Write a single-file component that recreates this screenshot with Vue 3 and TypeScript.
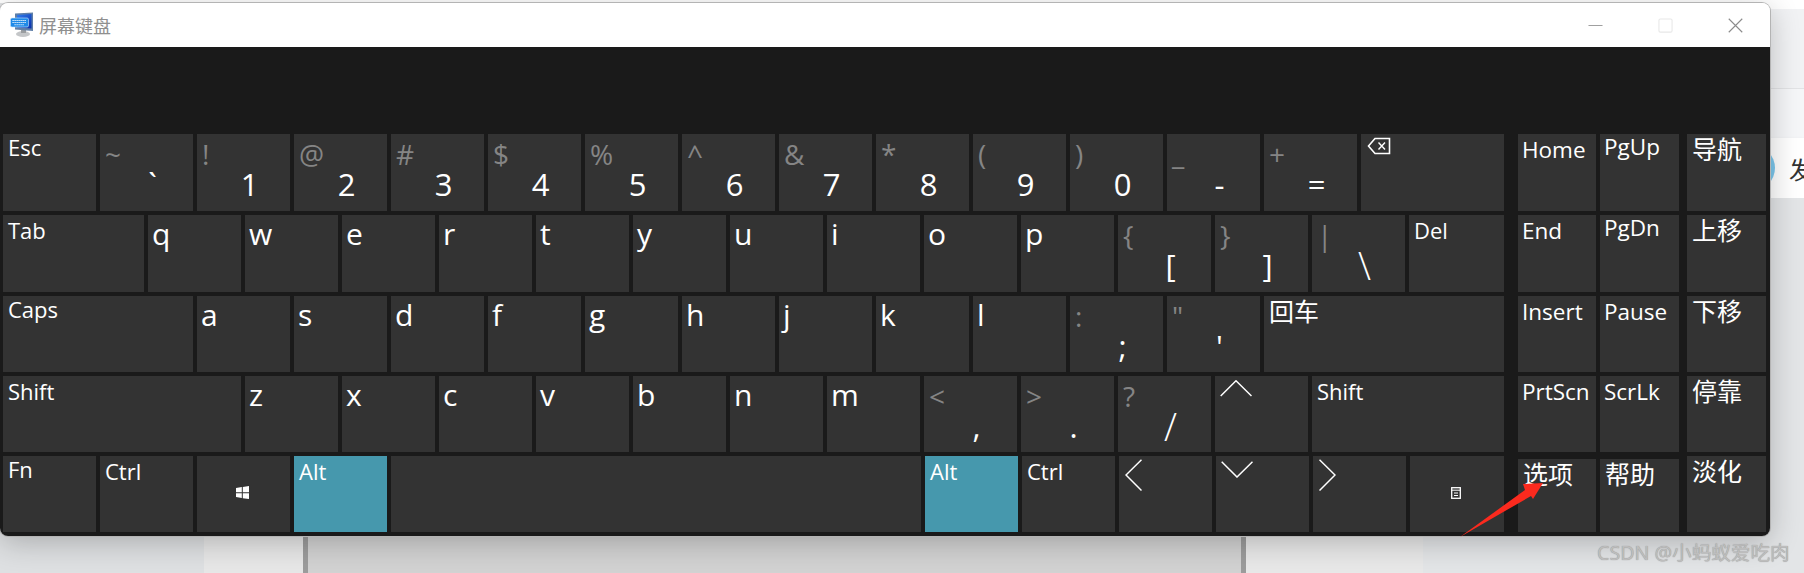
<template>
  <div class="desk">
    <div class="desk__seg desk__seg--a"></div>
    <div class="desk__seg desk__seg--b"></div>
    <div class="desk__rule"></div>
    <div class="desk__seg desk__seg--c"></div>
    <div class="desk__rule"></div>
    <div class="desk__seg desk__seg--d"></div>
    <div class="desk__side">
      <div class="side__top"></div>
      <div class="side__band"></div>
      <div class="side__band side__band--low"></div>
      <div class="side__chip">
        <span class="side__avatar"></span>
        <span class="side__text">发</span>
      </div>
      <div class="side__rest"></div>
    </div>

    <section class="osk">
      <header class="osk__title">
        <svg class="osk__icon" width="24" height="26" viewBox="0 0 24 26">
          <defs>
            <linearGradient id="scr" x1="0" y1="0" x2="1" y2="1">
              <stop offset="0" stop-color="#2f7df0" />
              <stop offset="1" stop-color="#0a2fa8" />
            </linearGradient>
          </defs>
          <ellipse cx="13" cy="22" rx="7" ry="3" fill="#c4c6c8" />
          <rect x="11" y="17" width="5" height="4" fill="#9a9da0" />
          <path d="M5 1.5 L23 0.5 V19 L5 17.5 Z" fill="#5f7fa8" />
          <path d="M7 3 L21.5 2 V16.5 L7 15.5 Z" fill="url(#scr)" />
          <rect x="0.5" y="6" width="18" height="9" rx="1.5" fill="#1f8ae8" stroke="#cfe6fb" stroke-width="0.6" />
          <path d="M2.5 8.5h14M2.5 10.5h14M4.5 12.8h10" stroke="#fff" stroke-width="1.1" stroke-dasharray="1.2 0.8" />
        </svg>
        <span class="osk__name">屏幕键盘</span>
        <div class="osk__ctrls">
          <svg width="15" height="15" viewBox="0 0 16 16" class="ctrl ctrl--min"><path d="M0.5 8h15" stroke="#a0a0a0" stroke-width="1.2" /></svg>
          <svg width="15" height="15" viewBox="0 0 16 16" class="ctrl ctrl--max"><rect x="1" y="1" width="14" height="14" rx="1.5" fill="none" stroke="#e8e8e8" stroke-width="1.2" /></svg>
          <svg width="15" height="15" viewBox="0 0 16 16" class="ctrl ctrl--close"><path d="M0.8 0.8l14.4 14.4M15.2 0.8L0.8 15.2" stroke="#8c8c8c" stroke-width="1.2" /></svg>
        </div>
      </header>

      <div class="osk__body">
        <div class="osk__display"></div>
        <div class="keys">
          <div class="keys__main">
            <div v-for="(row, r) in mainRows" :key="r" class="keyrow">
              <div
                v-for="k in row"
                :key="k.id"
                class="key"
                :class="[`key--${k.kind}`, { 'key--on': k.on, 'key--raised': k.raised }]"
                :style="{ width: k.w + 'px' }"
              >
                <template v-if="k.kind === 'dual'">
                  <span class="key__shift">{{ k.shift }}</span>
                  <span class="key__main" :class="{ 'key__main--tall': k.text === '/' || k.text === '\\' }">{{ k.text }}</span>
                </template>
                <svg v-else-if="k.kind === 'icon'" class="key__svg" :class="`key__svg--${k.icon}`" :width="k.iw" :height="k.ih" :viewBox="`0 0 ${k.iw} ${k.ih}`">
                  <template v-if="k.icon === 'back'">
                    <path d="M1.5 9 L8 1.5 H22.5 V16.5 H8 Z" fill="none" stroke="#fff" stroke-width="1.6" />
                    <path d="M11.5 5.5l6.5 7M18 5.5l-6.5 7" stroke="#fff" stroke-width="1.4" />
                  </template>
                  <path v-else-if="k.icon === 'up'" d="M0.7 16 L16 0.8 L31.5 16" fill="none" stroke="#fff" stroke-width="1.5" />
                  <path v-else-if="k.icon === 'down'" d="M0.7 0.8 L16 16 L31.5 0.8" fill="none" stroke="#fff" stroke-width="1.5" />
                  <path v-else-if="k.icon === 'left'" d="M16.5 0.7 L1 16 L16.5 31.5" fill="none" stroke="#fff" stroke-width="1.5" />
                  <path v-else-if="k.icon === 'right'" d="M0.5 0.7 L16 16 L0.5 31.5" fill="none" stroke="#fff" stroke-width="1.5" />
                  <path v-else-if="k.icon === 'win'" d="M0 2 L5.8 1.1 V6.2 H0 Z M6.8 0.9 L13 0 V6.2 H6.8 Z M0 7.2 H5.8 V12 L0 11.1 Z M6.8 7.2 H13 V13 L6.8 12.2 Z" fill="#fff" />
                  <template v-else-if="k.icon === 'menu'">
                    <rect x="0.7" y="0.7" width="8.6" height="10.6" fill="none" stroke="#fff" stroke-width="1.3" />
                    <path d="M0.7 3.2h8.6M3 6h4M3 8.5h4" stroke="#fff" stroke-width="1" />
                  </template>
                </svg>
                <span v-else class="key__text">{{ k.text }}</span>
              </div>
            </div>
          </div>

          <div class="keys__nav">
            <div v-for="(row, r) in navRows" :key="r" class="keyrow">
              <div
                v-for="(t, i) in row"
                :key="t"
                class="key"
                :class="[cjk(t) ? 'key--cjk' : 'key--label key--navlabel', `nav${i}`, { 'key--sunk': r === 4 && i < 2, 'key--raised': t === 'PgUp' || t === 'PgDn' }]"
              >
                <span class="key__text">{{ t }}</span>
              </div>
            </div>
          </div>
        </div>
      </div>
    </section>

    <svg class="mark-arrow" width="90" height="60" viewBox="0 0 90 60">
      <path d="M0 57 L65 10 L63 4 L83 3 L73 19 L71 16 Z" fill="#fb2a1e" />
    </svg>
    <div class="watermark">CSDN @小蚂蚁爱吃肉</div>
  </div>
</template>

<script setup lang="ts">
type Kind = "label" | "letter" | "dual" | "icon" | "cjk" | "plain";

interface KeyDef {
  id: string;
  kind: Kind;
  w: number;
  text?: string;
  shift?: string;
  on?: boolean;
  raised?: boolean;
  icon?: string;
  iw?: number;
  ih?: number;
}

const label = (text: string, w = 93, on = false): KeyDef => ({ id: text + w, kind: "label", w, text, on });
const raised = (text: string, w = 93): KeyDef => ({ ...label(text, w), raised: true });
const letter = (text: string): KeyDef => ({ id: text, kind: "letter", w: 93, text });
const dual = (shift: string, text: string): KeyDef => ({ id: text, kind: "dual", w: 93, text, shift });
const icon = (name: string, w: number, iw: number, ih: number): KeyDef => ({ id: name, kind: "icon", w, icon: name, iw, ih });

const letters = (s: string) => s.split("").map(letter);

const mainRows: KeyDef[][] = [
  [
    raised("Esc"),
    dual("~", "`"),
    dual("!", "1"),
    dual("@", "2"),
    dual("#", "3"),
    dual("$", "4"),
    dual("%", "5"),
    dual("^", "6"),
    dual("&", "7"),
    dual("*", "8"),
    dual("(", "9"),
    dual(")", "0"),
    dual("_", "-"),
    dual("+", "="),
    icon("back", 143, 24, 18),
  ],
  [
    label("Tab", 141),
    ...letters("qwertyuiop"),
    dual("{", "["),
    dual("}", "]"),
    dual("|", "\\"),
    label("Del", 95),
  ],
  [
    raised("Caps", 190),
    ...letters("asdfghjkl"),
    dual(":", ";"),
    dual('"', "'"),
    { id: "enter", kind: "cjk", w: 240, text: "回车" },
  ],
  [
    label("Shift", 238),
    ...letters("zxcvbnm"),
    dual("<", ","),
    dual(">", "."),
    dual("?", "/"),
    icon("up", 93, 32, 17),
    label("Shift", 192),
  ],
  [
    raised("Fn"),
    label("Ctrl"),
    icon("win", 93, 13, 13),
    label("Alt", 93, true),
    { id: "space", kind: "plain", w: 530 },
    label("Alt", 93, true),
    label("Ctrl", 93),
    icon("left", 93, 17, 32),
    icon("down", 93, 32, 17),
    icon("right", 93, 17, 32),
    icon("menu", 94, 10, 12),
  ],
];

const navRows: string[][] = [
  ["Home", "PgUp", "导航"],
  ["End", "PgDn", "上移"],
  ["Insert", "Pause", "下移"],
  ["PrtScn", "ScrLk", "停靠"],
  ["选项", "帮助", "淡化"],
];

const cjk = (t: string) => /[^\x00-\x7f]/.test(t);
</script>

<style>
html,
body {
  margin: 0;
  background: #eee;
}
</style>

<style scoped>
.desk {
  position: relative;
  display: flex;
  width: 1804px;
  height: 573px;
  overflow: hidden;
  background: #fff;
  font-family: "Open Sans", "Noto Sans CJK SC", sans-serif;
}

.desk__seg {
  flex: none;
  margin-top: 3px;
}

.desk__seg--a {
  width: 204px;
  background: #dee0e2;
}

.desk__seg--b {
  width: 99px;
  background: #e7e7e7;
}

.desk__rule {
  flex: none;
  width: 5px;
  margin-top: 40px;
  background: #9c9c9c;
}

.desk__seg--c {
  width: 933px;
  background: #d2d2d2;
}

.desk__seg--d {
  width: 177px;
  background: #e8e8e8;
}

.desk__side {
  flex: 1;
  min-width: 0;
  display: flex;
  flex-direction: column;
}

.side__top {
  height: 9px;
  background: #fff;
}

.side__band {
  height: 79px;
  background: #f1f2f4;
  border-bottom: 1px solid #e2e3e5;
}

.side__band--low {
  height: 49px;
  background: #f5f6f8;
  border-bottom: 0;
}

.side__chip {
  height: 60px;
  display: flex;
  align-items: center;
  padding-left: 306px;
  background: #fff;
  box-shadow: 0 1px 3px rgba(0, 0, 0, 0.08);
}

.side__avatar {
  width: 46px;
  height: 46px;
  border-radius: 50%;
  flex: none;
  background: #7cc8ee;
}

.side__text {
  margin-left: 14px;
  font-size: 24px;
  color: #333;
  white-space: nowrap;
}

.side__rest {
  flex: 1;
  background: #e3e5e7;
}

.osk {
  position: absolute;
  left: 0;
  top: 3px;
  width: 1770px;
  height: 533px;
  display: flex;
  flex-direction: column;
  overflow: hidden;
  border-radius: 8px;
  box-shadow: 0 0 0 1px #b4b4b4, 0 6px 30px rgba(0, 0, 0, 0.24);
}

.osk__title {
  height: 44px;
  flex: none;
  display: flex;
  align-items: center;
  padding-left: 10px;
  background: #fff;
}

.osk__name {
  margin-left: 5px;
  font-size: 18px;
  color: #8f8f8f;
  font-family: "Noto Sans CJK SC", sans-serif;
}

.osk__ctrls {
  margin-left: auto;
  display: flex;
  gap: 55px;
  padding-right: 27px;
}

.ctrl {
  display: block;
}

.osk__body {
  flex: 1;
  background: #1a1a1a;
  padding-left: 3px;
}

.osk__display {
  height: 87px;
}

.keys {
  display: flex;
  gap: 14px;
}

.keys__main,
.keys__nav {
  display: grid;
  grid-template-rows: 77px 77px 76px 76px 76px;
  row-gap: 4px;
}

.keyrow {
  display: flex;
  gap: 4px;
}

.key {
  box-sizing: border-box;
  display: flex;
  flex-direction: column;
  flex: none;
  background: #333;
  color: #fff;
}

.key--on {
  background: #4698ad;
}

.key--label {
  padding: 1px 0 0 5px;
  font-size: 22px;
  line-height: 28px;
}

.key--navlabel {
  padding: 2px 0 0 4px;
  font-size: 22.5px;
}

.key--raised {
  padding-top: 0;
  line-height: 26px;
}

.key--letter {
  padding: 0 0 0 4px;
  font-size: 30px;
  line-height: 38px;
}

.key--cjk {
  padding: 0 0 0 5px;
  font-size: 25px;
  line-height: 30px;
}

.key--dual {
  justify-content: space-between;
  padding: 5px 0 12px 5px;
}

.key__shift {
  font-size: 28px;
  line-height: 30px;
  color: #858585;
}

.key__main {
  padding-left: 12px;
  padding-right: 5px;
  text-align: center;
  font-size: 31px;
  line-height: 30px;
}

.key__main--tall {
  font-size: 38px;
  font-weight: 300;
}

.key--icon {
  padding: 0;
}

.key__svg {
  display: block;
}

.key__svg--back {
  margin: 3px 0 0 6px;
}

.key__svg--up {
  margin: 4px 0 0 5px;
}

.key__svg--down {
  margin: 5px 0 0 5px;
}

.key__svg--left {
  margin: 3px 0 0 6px;
}

.key__svg--right {
  margin: 3px 0 0 6px;
}

.key__svg--win {
  margin: 30px 0 0 39px;
}

.key__svg--menu {
  margin: 31px 0 0 41px;
}

.nav0 {
  width: 78px;
}

.nav1 {
  width: 79px;
}

.nav2 {
  width: 79px;
  margin-left: 4px;
}

.key--sunk {
  margin-top: 3px;
}

.mark-arrow {
  position: absolute;
  left: 1460px;
  top: 480px;
}

.watermark {
  position: absolute;
  left: 1597px;
  top: 540px;
  font-size: 19.6px;
  line-height: 26px;
  color: #bdbdbd;
  text-shadow: 0 0 1px #888;
  font-family: "Noto Sans", "Noto Sans CJK SC", sans-serif;
  white-space: nowrap;
}
</style>
